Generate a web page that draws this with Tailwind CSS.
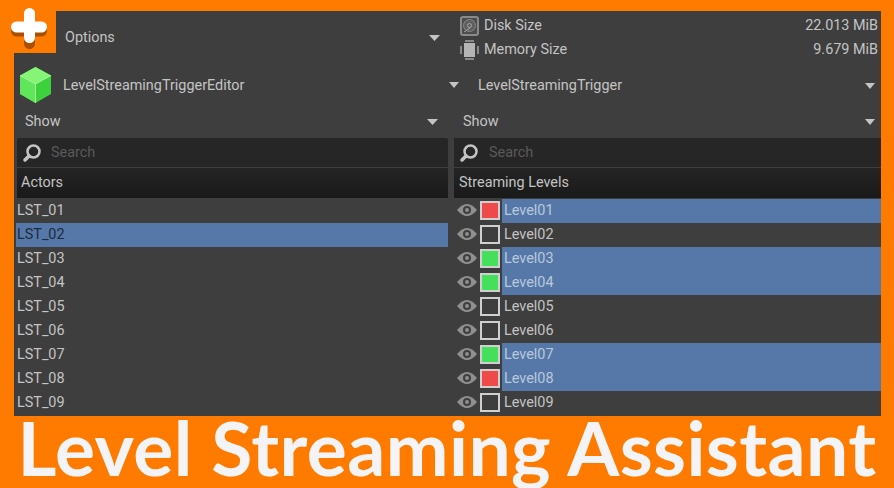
<!DOCTYPE html>
<html lang="en">
<head>
  <meta charset="UTF-8" />
  <title>Level Streaming Assistant</title>
  <script src="https://cdn.jsdelivr.net/npm/@tailwindcss/browser@4"></script>
</head>
<body class="bg-[#ff7b00]">
  <div class="relative w-[894px] h-[488px] overflow-hidden bg-[#ff7b00] font-['Roboto',sans-serif] text-[14.4px] text-[#c4c4c4]">
    <div class="ml-[14px] mt-[11px] w-[867px] h-[405px] bg-[#3e3e3e] absolute top-0 left-0 grid grid-cols-[435px_432px]">
      <!-- left column -->
      <div class="flex flex-col">
        <div class="h-[53px] flex items-center pl-[51px] pr-[9px] justify-between pt-[1px]">
          <span>Options</span>
          <svg width="11" height="6" viewBox="0 0 11 6"><path d="M0 0H11L5.500 6Z" fill="#c4c4c4"/></svg>
        </div>
        <div class="h-[40px] flex items-center pl-[5px] pt-[3px]">
          <svg width="33" height="37" viewBox="0 0 33 37">
            <path d="M16.500 0L32 8.500V27L16.500 36L1 27V8.500Z" fill="#3ed13e"/>
            <path d="M16.500 0L32 8.500L16.500 17L1 8.500Z" fill="#86f577"/>
            <path d="M1 8.500L16.500 17V36L1 27Z" fill="#5fe65a"/>
            <path d="M1 8.500L16.500 17L32 8.500M16.500 17V36" stroke="#a8f59a" stroke-width="1" fill="none"/>
          </svg>
          <span class="ml-[11px]">LevelStreamingTriggerEditor</span>
        </div>
        <div class="h-[34px] flex items-center justify-between pl-[11px] pr-[11px] pt-[1px]">
          <span>Show</span>
          <svg width="11" height="6" viewBox="0 0 11 6"><path d="M0 0H11L5.500 6Z" fill="#c4c4c4"/></svg>
        </div>
        <div class="ml-[3px] mr-[1px] h-[29px] bg-[#262626] flex items-center pl-[5px] rounded-t-[2px]">
          <svg width="20" height="20" viewBox="0 0 20 20"><circle cx="11.500" cy="8.500" r="6" fill="none" stroke="#c4c4c4" stroke-width="2.500"/><path d="M7 13L3 17" stroke="#c4c4c4" stroke-width="3.500" stroke-linecap="round"/></svg>
          <span class="ml-[9px] text-[#5a5a5a]">Search</span>
        </div>
        <div class="ml-[3px] mr-[1px] mt-[1px] h-[30px] bg-gradient-to-b from-[#242424] to-[#1a1a1a] flex items-center pl-[4px] pb-[1px]">Actors</div>
        <div class="mt-[1px] flex flex-col">
          <div class="h-[24px] flex items-center pl-[3px] pb-[1px]">LST_01</div>
          <div class="h-[24px] flex items-center pl-[1px] pb-[1px] ml-[2px] mr-[1px] bg-[#5578a8] text-[#1d2a3c]">LST_02</div>
          <div class="h-[24px] flex items-center pl-[3px] pb-[1px]">LST_03</div>
          <div class="h-[24px] flex items-center pl-[3px] pb-[1px]">LST_04</div>
          <div class="h-[24px] flex items-center pl-[3px] pb-[1px]">LST_05</div>
          <div class="h-[24px] flex items-center pl-[3px] pb-[1px]">LST_06</div>
          <div class="h-[24px] flex items-center pl-[3px] pb-[1px]">LST_07</div>
          <div class="h-[24px] flex items-center pl-[3px] pb-[1px]">LST_08</div>
          <div class="h-[24px] flex items-center pl-[3px] pb-[1px]">LST_09</div>
        </div>
      </div>

      <!-- right column -->
      <div class="flex flex-col">
        <div class="h-[53px] flex flex-col justify-center pl-[11px] pr-[3px] pt-[1px]">
          <div class="h-[24px] flex items-center justify-between">
            <span class="flex items-center gap-[5px]">
              <svg width="19" height="20" viewBox="0 0 19 20"><rect x="1" y="1" width="17" height="18" rx="2" fill="#4c4c4c" stroke="#8a8a8a" stroke-width="2"/><circle cx="9.500" cy="9.500" r="6" fill="#5e5e5e" stroke="#8a8a8a"/><circle cx="9.500" cy="9.500" r="2" fill="none" stroke="#a8a8a8"/><path d="M4 16L10 12" stroke="#a8a8a8"/></svg>
              Disk Size
            </span>
            <span>22.013 MiB</span>
          </div>
          <div class="h-[24px] flex items-center justify-between">
            <span class="flex items-center gap-[5px]">
              <svg width="19" height="20" viewBox="0 0 19 20"><rect x="4" y="3" width="11" height="14" fill="#b5b5b5"/><path d="M1 6V14M18 6V14M5 1H14M5 19H14" stroke="#8a8a8a" stroke-width="2"/></svg>
              Memory Size
            </span>
            <span>9.679 MiB</span>
          </div>
        </div>
        <div class="h-[40px] flex items-center justify-between pr-[6px] pt-[3px]">
          <span class="flex items-center">
            <svg width="10" height="6" viewBox="0 0 10 6"><path d="M0 0H10L5 6Z" fill="#c4c4c4"/></svg>
            <span class="ml-[19px]">LevelStreamingTrigger</span>
          </span>
          <svg width="10" height="6" viewBox="0 0 10 6"><path d="M0 0H10L5 6Z" fill="#c4c4c4"/></svg>
        </div>
        <div class="h-[34px] flex items-center justify-between pl-[14px] pr-[6px] pt-[1px]">
          <span>Show</span>
          <svg width="10" height="6" viewBox="0 0 10 6"><path d="M0 0H10L5 6Z" fill="#c4c4c4"/></svg>
        </div>
        <div class="ml-[5px] h-[29px] bg-[#262626] flex items-center pl-[5px]">
          <svg width="20" height="20" viewBox="0 0 20 20"><circle cx="11.500" cy="8.500" r="6" fill="none" stroke="#c4c4c4" stroke-width="2.500"/><path d="M7 13L3 17" stroke="#c4c4c4" stroke-width="3.500" stroke-linecap="round"/></svg>
          <span class="ml-[10px] text-[#5a5a5a]">Search</span>
        </div>
        <div class="ml-[5px] mt-[1px] h-[30px] bg-gradient-to-b from-[#242424] to-[#1a1a1a] flex items-center pl-[5px] pb-[1px]">Streaming Levels</div>
        <div class="mt-[1px] flex flex-col">
          <div class="h-[24px] flex items-center pl-[8px]">
            <svg class="mb-[2px]" width="20" height="14" viewBox="0 0 20 14"><path d="M0 7Q10 -5 20 7Q10 19 0 7Z" fill="#8f8f8f"/><circle cx="10" cy="7" r="4" fill="#3e3e3e"/><circle cx="10" cy="7" r="2" fill="#8f8f8f"/></svg>
            <span class="ml-[3px] mb-[2px] w-[20px] h-[19px] border-2 border-[#d0d0d0] bg-[#ee4a4a]"></span>
            <span class="ml-[2px] pl-[2px] pb-[1px] h-full flex-1 flex items-center bg-[#5578a8] text-[#b9c8dc]">Level01</span>
          </div>
          <div class="h-[24px] flex items-center pl-[8px]">
            <svg class="mb-[2px]" width="20" height="14" viewBox="0 0 20 14"><path d="M0 7Q10 -5 20 7Q10 19 0 7Z" fill="#8f8f8f"/><circle cx="10" cy="7" r="4" fill="#3e3e3e"/><circle cx="10" cy="7" r="2" fill="#8f8f8f"/></svg>
            <span class="ml-[3px] mb-[2px] w-[20px] h-[19px] border-2 border-[#d0d0d0]"></span>
            <span class="ml-[2px] pl-[2px] pb-[1px] h-full flex-1 flex items-center">Level02</span>
          </div>
          <div class="h-[24px] flex items-center pl-[8px]">
            <svg class="mb-[2px]" width="20" height="14" viewBox="0 0 20 14"><path d="M0 7Q10 -5 20 7Q10 19 0 7Z" fill="#8f8f8f"/><circle cx="10" cy="7" r="4" fill="#3e3e3e"/><circle cx="10" cy="7" r="2" fill="#8f8f8f"/></svg>
            <span class="ml-[3px] mb-[2px] w-[20px] h-[19px] border-2 border-[#d0d0d0] bg-[#44e05c]"></span>
            <span class="ml-[2px] pl-[2px] pb-[1px] h-full flex-1 flex items-center bg-[#5578a8] text-[#b9c8dc]">Level03</span>
          </div>
          <div class="h-[24px] flex items-center pl-[8px]">
            <svg class="mb-[2px]" width="20" height="14" viewBox="0 0 20 14"><path d="M0 7Q10 -5 20 7Q10 19 0 7Z" fill="#8f8f8f"/><circle cx="10" cy="7" r="4" fill="#3e3e3e"/><circle cx="10" cy="7" r="2" fill="#8f8f8f"/></svg>
            <span class="ml-[3px] mb-[2px] w-[20px] h-[19px] border-2 border-[#d0d0d0] bg-[#44e05c]"></span>
            <span class="ml-[2px] pl-[2px] pb-[1px] h-full flex-1 flex items-center bg-[#5578a8] text-[#b9c8dc]">Level04</span>
          </div>
          <div class="h-[24px] flex items-center pl-[8px]">
            <svg class="mb-[2px]" width="20" height="14" viewBox="0 0 20 14"><path d="M0 7Q10 -5 20 7Q10 19 0 7Z" fill="#8f8f8f"/><circle cx="10" cy="7" r="4" fill="#3e3e3e"/><circle cx="10" cy="7" r="2" fill="#8f8f8f"/></svg>
            <span class="ml-[3px] mb-[2px] w-[20px] h-[19px] border-2 border-[#d0d0d0]"></span>
            <span class="ml-[2px] pl-[2px] pb-[1px] h-full flex-1 flex items-center">Level05</span>
          </div>
          <div class="h-[24px] flex items-center pl-[8px]">
            <svg class="mb-[2px]" width="20" height="14" viewBox="0 0 20 14"><path d="M0 7Q10 -5 20 7Q10 19 0 7Z" fill="#8f8f8f"/><circle cx="10" cy="7" r="4" fill="#3e3e3e"/><circle cx="10" cy="7" r="2" fill="#8f8f8f"/></svg>
            <span class="ml-[3px] mb-[2px] w-[20px] h-[19px] border-2 border-[#d0d0d0]"></span>
            <span class="ml-[2px] pl-[2px] pb-[1px] h-full flex-1 flex items-center">Level06</span>
          </div>
          <div class="h-[24px] flex items-center pl-[8px]">
            <svg class="mb-[2px]" width="20" height="14" viewBox="0 0 20 14"><path d="M0 7Q10 -5 20 7Q10 19 0 7Z" fill="#8f8f8f"/><circle cx="10" cy="7" r="4" fill="#3e3e3e"/><circle cx="10" cy="7" r="2" fill="#8f8f8f"/></svg>
            <span class="ml-[3px] mb-[2px] w-[20px] h-[19px] border-2 border-[#d0d0d0] bg-[#44e05c]"></span>
            <span class="ml-[2px] pl-[2px] pb-[1px] h-full flex-1 flex items-center bg-[#5578a8] text-[#b9c8dc]">Level07</span>
          </div>
          <div class="h-[24px] flex items-center pl-[8px]">
            <svg class="mb-[2px]" width="20" height="14" viewBox="0 0 20 14"><path d="M0 7Q10 -5 20 7Q10 19 0 7Z" fill="#8f8f8f"/><circle cx="10" cy="7" r="4" fill="#3e3e3e"/><circle cx="10" cy="7" r="2" fill="#8f8f8f"/></svg>
            <span class="ml-[3px] mb-[2px] w-[20px] h-[19px] border-2 border-[#d0d0d0] bg-[#ee4a4a]"></span>
            <span class="ml-[2px] pl-[2px] pb-[1px] h-full flex-1 flex items-center bg-[#5578a8] text-[#b9c8dc]">Level08</span>
          </div>
          <div class="h-[24px] flex items-center pl-[8px]">
            <svg class="mb-[2px]" width="20" height="14" viewBox="0 0 20 14"><path d="M0 7Q10 -5 20 7Q10 19 0 7Z" fill="#8f8f8f"/><circle cx="10" cy="7" r="4" fill="#3e3e3e"/><circle cx="10" cy="7" r="2" fill="#8f8f8f"/></svg>
            <span class="ml-[3px] mb-[2px] w-[20px] h-[19px] border-2 border-[#d0d0d0]"></span>
            <span class="ml-[2px] pl-[2px] pb-[1px] h-full flex-1 flex items-center">Level09</span>
          </div>
        </div>
      </div>
    </div>

    <!-- plus badge sits on the panel corner -->
    <div class="absolute left-0 top-0 w-[56px] h-[53px] bg-[#ff7b00]">
      <svg width="56" height="53" viewBox="0 0 56 53">
        <path d="M29.500 18V43.500M16.500 31H41.500" stroke="#a84f00" stroke-width="11" stroke-linecap="round" fill="none"/>
        <path d="M29.500 13.500V37.500M16.500 27H41.500" stroke="#fff" stroke-width="11" stroke-linecap="round" fill="none"/>
      </svg>
    </div>

    <div class="absolute left-0 top-[410px] w-full h-[75px] flex justify-center items-center font-['Lato',sans-serif] font-bold text-[75px] leading-none tracking-[0.4px] text-[#f4f4f6] whitespace-nowrap">Level Streaming Assistant</div>
  </div>
</body>
</html>
